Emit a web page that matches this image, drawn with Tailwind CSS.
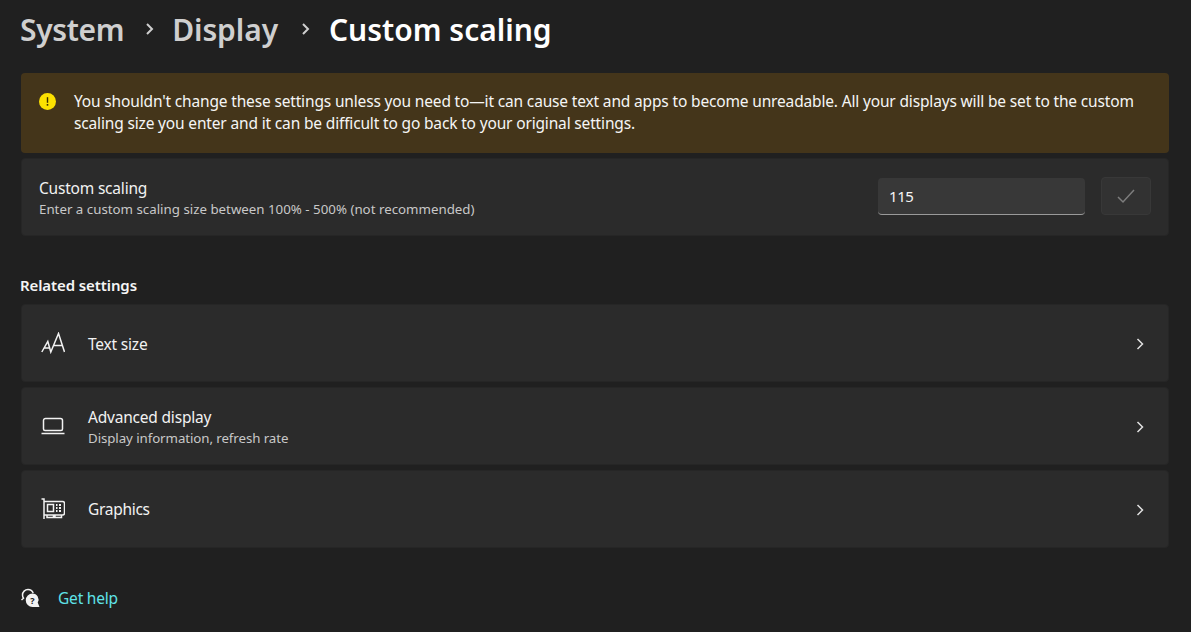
<!DOCTYPE html>
<html lang="en">
<head>
    <meta charset="UTF-8">
    <title>Custom scaling</title>
    <script src="https://cdn.jsdelivr.net/npm/@tailwindcss/browser@4"></script>
</head>
<body class="bg-[#202020] text-white font-['Noto_Sans',sans-serif] w-[1191px] h-[632px] overflow-hidden">
    <div class="pl-[20px] pr-[22px] pt-[7px]">
        <!-- breadcrumb -->
        <div class="flex items-center h-[44px] text-[30px] font-semibold">
            <span class="text-[#cfcfcf] tracking-[-0.35px]">System</span>
            <svg class="w-3 h-3 ml-[20px] mr-[16px]" viewBox="0 0 12 12" fill="none" stroke="#cfcfcf" stroke-width="2"><path d="M3 1 8 6l-5 5"/></svg>
            <span class="text-[#cfcfcf] tracking-[-0.1px]">Display</span>
            <svg class="w-3 h-3 ml-[22px] mr-[17px]" viewBox="0 0 12 12" fill="none" stroke="#cfcfcf" stroke-width="2"><path d="M3 1 8 6l-5 5"/></svg>
            <span>Custom scaling</span>
        </div>

        <!-- warning -->
        <div class="mt-[22px] ml-px h-[80px] bg-[#44351a] rounded-[4px] flex pl-[18px] pt-[17px]">
            <svg class="w-[17px] h-[17px] mt-[3px] shrink-0" viewBox="0 0 17 17"><circle cx="8.500" cy="8.500" r="8.500" fill="#fce100"/><rect x="7.800" y="4.200" width="1.400" height="5.600" fill="#3a3000"/><rect x="7.700" y="11" width="1.600" height="1.700" fill="#3a3000"/></svg>
            <p class="ml-[18px] text-[15.500px] leading-[22px] text-[#f5f5f5] tracking-[-0.16px] whitespace-nowrap">You shouldn't change these settings unless you need to—it can cause text and apps to become unreadable. All your displays will be set to the custom<br>scaling size you enter and it can be difficult to go back to your original settings.</p>
        </div>

        <!-- custom scaling card -->
        <div class="mt-[5px] ml-px h-[78px] bg-[#2b2b2b] rounded-[4px] border border-[#262626] flex items-center pl-[17px] pr-[17px]">
            <div class="flex-1 pt-[4px]">
                <div class="text-[15.500px] leading-[21px] text-[#f2f2f2] tracking-[-0.2px]">Custom scaling</div>
                <div class="text-[13.300px] leading-[21px] text-[#c8c8c8]">Enter a custom scaling size between 100% - 500% (not recommended)</div>
            </div>
            <div class="mb-[2px] w-[207px] h-[37px] bg-[#383838] rounded-[4px] border-b border-[#9a9a9a] flex items-center pl-[11px] pt-[2px] text-[15px] tracking-[-0.4px] text-[#f5f5f5]">115</div>
            <div class="mb-[2px] ml-[16px] w-[50px] h-[38px] bg-[#323232] rounded-[4px] border border-[#383838] flex items-center justify-center">
                <svg class="w-[18px] h-[16px]" viewBox="0 0 18 16" fill="none" stroke="#7d7d7d" stroke-width="1.500"><path d="M1 9l5 5L17 2"/></svg>
            </div>
        </div>

        <div class="mt-[39px] h-[20px] flex items-center text-[15px] font-semibold tracking-[-0.1px] text-[#f5f5f5]">Related settings</div>

        <!-- related rows -->
        <div class="mt-[9px] ml-px flex flex-col gap-[5px]">
            <div class="h-[78px] bg-[#2b2b2b] rounded-[4px] border border-[#262626] flex items-center pl-[19px] pr-[22px]">
                <svg class="w-[24px] h-[22px] shrink-0" viewBox="0 0 24 22" fill="none" stroke="#f2f2f2" stroke-width="1.500"><path d="M.8 20 6.800 9.500 9.800 20 17.500 1.500 23.500 20M3 16h6M12.500 13.500h8.500"/></svg>
                <span class="ml-[23px] pt-[4px] flex-1 text-[15.500px] tracking-[-0.2px] text-[#f2f2f2]">Text size</span>
                <svg class="w-3 h-3 mt-[2px]" viewBox="0 0 12 12" fill="none" stroke="#e0e0e0" stroke-width="1.500"><path d="M3.500 1 8.500 6l-5 5"/></svg>
            </div>
            <div class="h-[78px] bg-[#2b2b2b] rounded-[4px] border border-[#262626] flex items-center pl-[19px] pr-[22px]">
                <svg class="w-[24px] h-[18px] shrink-0" viewBox="0 0 24 18" fill="none" stroke="#f2f2f2" stroke-width="1.500"><path d="M4 13.500a1.500 1.500 0 0 1-1.500-1.500V3.500A2 2 0 0 1 4.500 1.500h15a2 2 0 0 1 2 2V12a1.500 1.500 0 0 1-1.500 1.500zM.5 16.500h23"/></svg>
                <div class="ml-[23px] flex-1 pt-[4px]">
                    <div class="text-[15.500px] leading-[21px] tracking-[-0.2px] text-[#f2f2f2]">Advanced display</div>
                    <div class="text-[13.300px] leading-[21px] tracking-[-0.08px] text-[#c8c8c8]">Display information, refresh rate</div>
                </div>
                <svg class="w-3 h-3 mt-[2px]" viewBox="0 0 12 12" fill="none" stroke="#e0e0e0" stroke-width="1.500"><path d="M3.500 1 8.500 6l-5 5"/></svg>
            </div>
            <div class="h-[78px] bg-[#2b2b2b] rounded-[4px] border border-[#262626] flex items-center pl-[19px] pr-[22px]">
                <svg class="w-[24px] h-[22px] shrink-0" viewBox="0 0 24 22" fill="none" stroke="#f2f2f2" stroke-width="1.500"><path d="M.5 1H3v20M3 3.500h18.500a2 2 0 0 1 2 2V15a2 2 0 0 1-2 2H3M6 17v2.500h6.500V17M14 17v2.500h6.500V17"/><rect x="6.500" y="6.500" width="6" height="7"/><path d="M15 7h1.500M18 7h2M15 10h1.500M18 10h2M15 13h1.500M18 13h2" stroke-width="1.800"/></svg>
                <span class="ml-[23px] pt-[2px] flex-1 text-[15.500px] tracking-[-0.3px] text-[#f2f2f2]">Graphics</span>
                <svg class="w-3 h-3 mt-[2px]" viewBox="0 0 12 12" fill="none" stroke="#e0e0e0" stroke-width="1.500"><path d="M3.500 1 8.500 6l-5 5"/></svg>
            </div>
        </div>

        <!-- help -->
        <div class="mt-[40px] h-[22px] flex items-center">
            <svg class="w-[20px] h-[20px] shrink-0 -mt-[2px]" viewBox="0 0 20 20"><path d="M1.500 12l2-1.800a5.500 5.500 0 0 1-1-3.200A5.500 5.500 0 0 1 8 1.500c2.400 0 4.400 1.500 5.200 3.600" fill="none" stroke="#f2f2f2" stroke-width="1.500"/><path d="M12.500 5.500a6 6 0 0 1 5.200 9L19.500 19h-7a6.700 6.700 0 0 1 0-13.500z" fill="#f2f2f2"/><text x="12.500" y="15.500" font-size="9" font-weight="700" text-anchor="middle" fill="#202020">?</text></svg>
            <span class="ml-[18px] text-[15.500px] tracking-[-0.2px] text-[#5fe3e8]">Get help</span>
        </div>
    </div>
</body>
</html>
